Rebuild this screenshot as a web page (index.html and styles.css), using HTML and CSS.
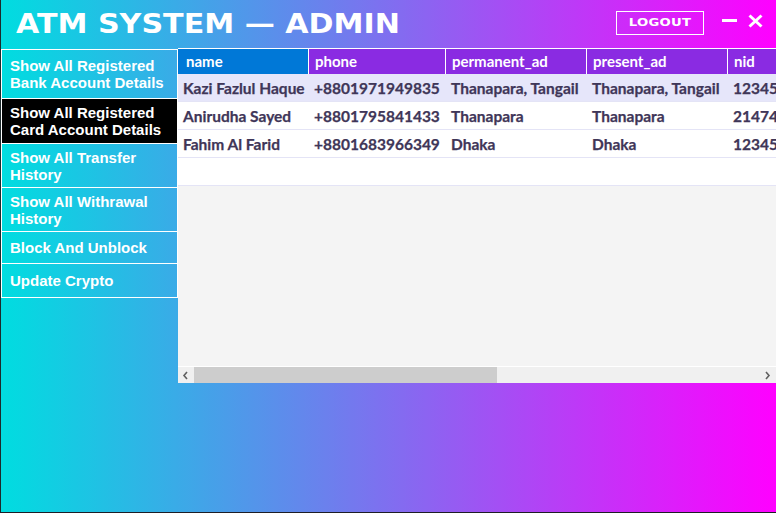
FILE: index.html
```html
<!DOCTYPE html>
<html>
<head>
<meta charset="utf-8">
<link rel="stylesheet" href="styles.css">
</head>
<body>
<div class="window">
  <header class="topbar">
    <h1 class="title"><span class="title-text">ATM SYSTEM — ADMIN</span></h1>
    <div class="controls">
      <button class="logout"><span class="logout-text">LOGOUT</span></button>
      <span class="minimize"></span>
      <svg class="close" width="15" height="14" viewBox="0 0 15 14"><path d="M1.5 1.5 L13.5 12.5 M13.5 1.5 L1.5 12.5" stroke="#fff" stroke-width="3" fill="none"/></svg>
    </div>
  </header>
  <div class="content">
    <nav class="sidebar">
      <button class="nav-btn b1">Show All Registered<br>Bank Account Details</button>
      <button class="nav-btn b2 active">Show All Registered<br>Card Account Details</button>
      <button class="nav-btn b3">Show All Transfer<br>History</button>
      <button class="nav-btn b3">Show All Withrawal<br>History</button>
      <button class="nav-btn b5">Block And Unblock</button>
      <button class="nav-btn b6">Update Crypto</button>
    </nav>
    <section class="grid">
      <div class="grid-inner">
        <div class="row head">
          <div class="cell c1 sel first">name</div>
          <div class="cell c2">phone</div>
          <div class="cell c3">permanent_ad</div>
          <div class="cell c4">present_ad</div>
          <div class="cell c5">nid</div>
        </div>
        <div class="row data selected">
          <div class="cell c1">Kazi Fazlul Haque</div>
          <div class="cell c2">+8801971949835</div>
          <div class="cell c3">Thanapara, Tangail</div>
          <div class="cell c4">Thanapara, Tangail</div>
          <div class="cell c5">1234567890</div>
        </div>
        <div class="row data">
          <div class="cell c1">Anirudha Sayed</div>
          <div class="cell c2">+8801795841433</div>
          <div class="cell c3">Thanapara</div>
          <div class="cell c4">Thanapara</div>
          <div class="cell c5">2147483647</div>
        </div>
        <div class="row data">
          <div class="cell c1">Fahim Al Farid</div>
          <div class="cell c2">+8801683966349</div>
          <div class="cell c3">Dhaka</div>
          <div class="cell c4">Dhaka</div>
          <div class="cell c5">1234567890</div>
        </div>
        <div class="row data">
          <div class="cell c1"></div>
        </div>
      </div>
      <div class="filler"></div>
      <div class="hscroll">
        <svg class="arrow" width="7" height="9" viewBox="0 0 7 9"><path d="M5 1 L2 4.5 L5 8" stroke="#606060" stroke-width="1.6" fill="none"/></svg>
        <div class="track"><div class="thumb"></div></div>
        <svg class="arrow" width="7" height="9" viewBox="0 0 7 9"><path d="M2 1 L5 4.5 L2 8" stroke="#606060" stroke-width="1.6" fill="none"/></svg>
      </div>
    </section>
  </div>
</div>
</body>
</html>
```

FILE: styles.css
```css
* { box-sizing: border-box; }
html, body { margin: 0; padding: 0; }
body { width: 776px; height: 513px; overflow: hidden; }

.window {
  width: 776px;
  height: 513px;
  background: linear-gradient(to right, #00dde0 0%, #ff00ff 100%);
  display: flex;
  flex-direction: column;
  border-left: 1px solid #1d2a2c;
  border-bottom: 1px solid #1d1d25;
}

.topbar {
  height: 48px;
  flex: none;
  display: flex;
  align-items: center;
  padding: 2px 13px 2px 15px;
  justify-content: space-between;
}

.title {
  margin: 0;
  font-family: "DejaVu Sans", sans-serif;
  font-weight: bold;
  font-size: 27px;
  line-height: 30px;
  color: #fff;
}
.title-text {
  display: inline-block;
  transform: scaleX(1.115);
  transform-origin: left center;
}

.controls {
  display: flex;
  align-items: center;
}
.logout {
  width: 88px;
  height: 24px;
  margin: 0 18px 3px 0;
  padding: 0;
  border: 1px solid #fff;
  background: transparent;
  color: #fff;
  font-family: "DejaVu Sans", sans-serif;
  font-weight: bold;
  font-size: 11px;
  display: flex;
  align-items: center;
  justify-content: center;
}
.logout-text {
  display: inline-block;
  transform: scaleX(1.2);
  letter-spacing: 0.2px;
}
.minimize {
  width: 15px;
  height: 3px;
  background: #fff;
  margin: 0 11px 8px 0;
}
.close { display: block; margin-bottom: 6px; }

.content {
  flex: 1;
  display: flex;
  align-items: flex-start;
}

.sidebar {
  width: 177px;
  flex: none;
  display: flex;
  flex-direction: column;
  padding-top: 1px;
}
.nav-btn {
  width: 177px;
  border: 1px solid #fff;
  background: transparent;
  color: #fff;
  font-family: "Liberation Sans", Arial, sans-serif;
  font-weight: bold;
  font-size: 15px;
  line-height: 17px;
  text-align: left;
  padding: 0 0 0 8px;
  margin: -1px 0 0 0;
  display: flex;
  align-items: center;
}
.nav-btn.b1 { height: 50px; margin-top: 0; }
.nav-btn.b2 { height: 46px; }
.nav-btn.b3 { height: 45px; }
.nav-btn.b5 { height: 33px; }
.nav-btn.b6 { height: 35px; }
.nav-btn.active { background: #000; }

.grid {
  width: 598px;
  height: 335px;
  flex: none;
  border-top: 1px solid #fff;
  display: flex;
  flex-direction: column;
  overflow: hidden;
  background: #f4f4f4;
}
.grid-inner { width: 700px; flex: none; }

.row { display: flex; background: #fff; }
.cell {
  flex: none;
  white-space: nowrap;
  overflow: hidden;
  font-family: Lato, sans-serif;
  font-weight: bold;
}
.c1 { width: 131px; }
.c2 { width: 137px; }
.c3 { width: 141px; }
.c4 { width: 141px; }
.c5 { width: 120px; }

.row.head { height: 25px; background: #8a2be2; }
.row.head .cell {
  color: #fff;
  font-size: 15px;
  line-height: 25px;
  padding-left: 6px;
  border-right: 1px solid #fff;
}
.row.head .cell.first { padding-left: 8px; }
.row.head .cell.sel { background: #0078d7; }

.row.data {
  height: 28px;
  border-bottom: 1px solid #e4e4f6;
}
.row.data .cell {
  color: #3f3658;
  font-size: 15.5px;
  line-height: 28px;
  padding-left: 5px;
  -webkit-text-stroke: 0.25px #3f3658;
}
.row.data.selected { background: #e6e6fa; }

.filler { flex: 1; background: #f4f4f4; }

.hscroll {
  height: 17px;
  flex: none;
  background: #f0f0f0;
  border-top: 1px solid #fff;
  display: flex;
  align-items: center;
}
.arrow { display: block; flex: none; margin: 0 5px; }
.track { flex: 1; height: 16px; position: relative; }
.track .thumb {
  position: absolute;
  left: 0;
  top: 0;
  width: 303px;
  height: 16px;
  background: #cdcdcd;
}
.hscroll .arrow:first-child { margin: 0 5px 0 4px; }
```
